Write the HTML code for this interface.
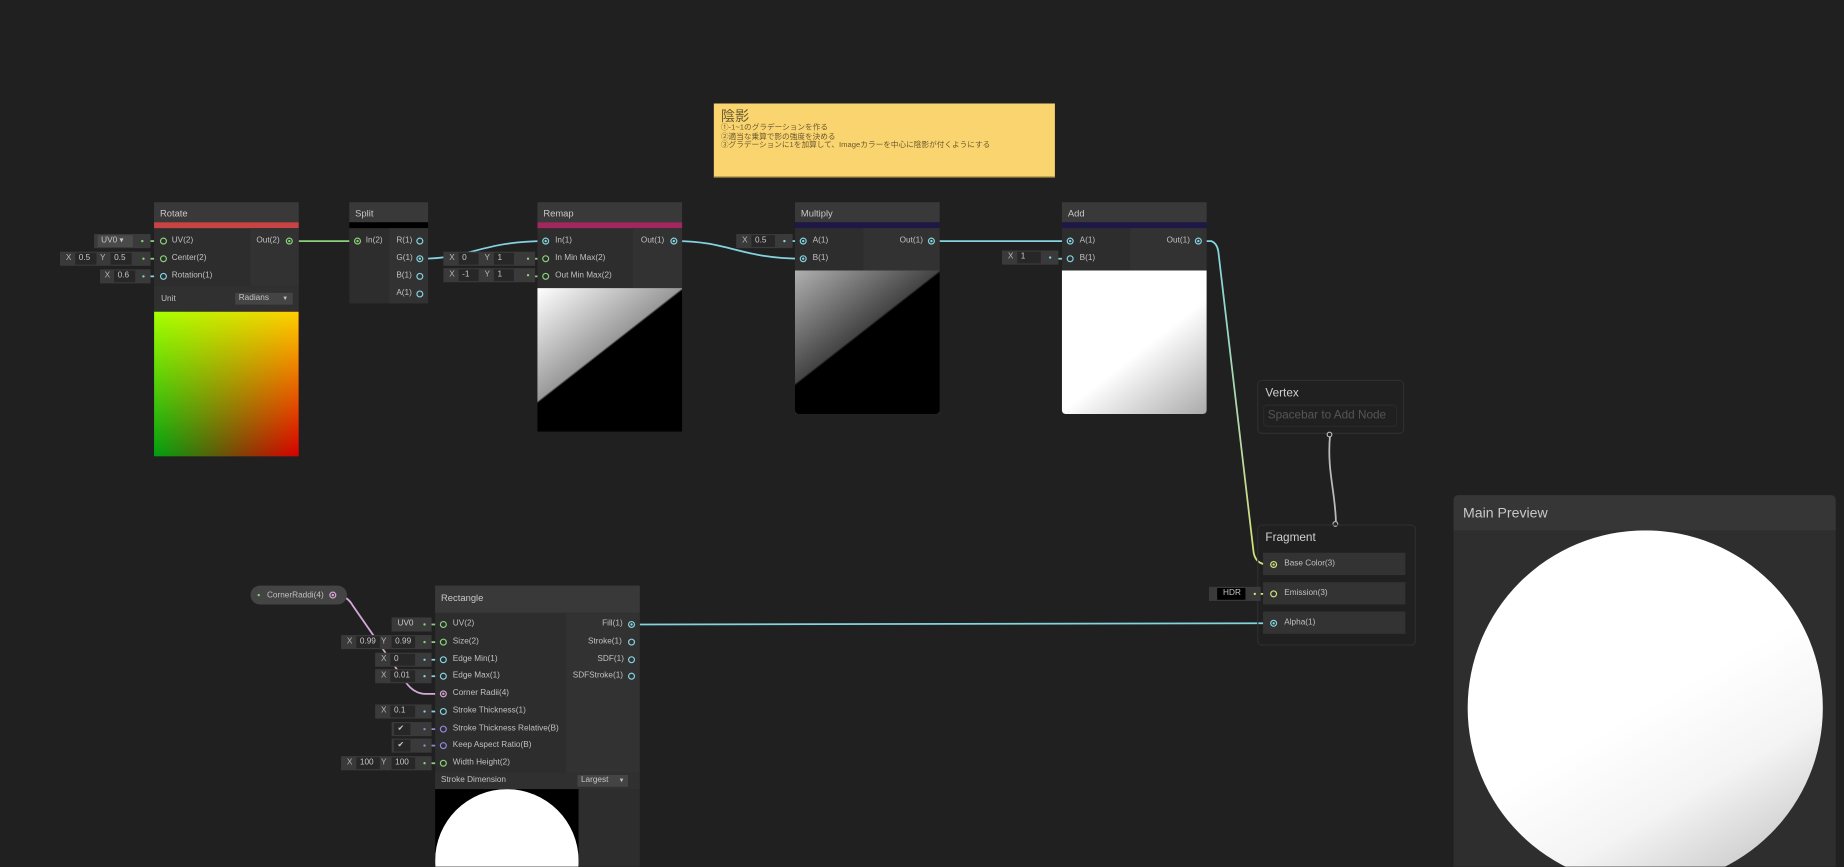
<!DOCTYPE html>
<html><head><meta charset="utf-8"><style>
html,body{margin:0;padding:0;background:#202020;overflow:hidden;width:1844px;height:867px}
#c{position:absolute;left:0;top:0;width:1568px;height:737px;overflow:hidden;transform:scale(1.17602);transform-origin:0 0;font-family:"Liberation Sans","Noto Sans CJK JP",sans-serif;color:#c4c4c4}
.a{position:absolute}
.h{position:absolute;background:#393939;font-size:8px;color:#c8c8c8;padding-left:5px;box-sizing:border-box}
.t{position:absolute;font-size:7px;line-height:8px;white-space:nowrap;color:#c0c0c0}
.p{position:absolute;width:4px;height:4px;border:1px solid;border-radius:50%;box-sizing:content-box}
.p.f::after{content:"";position:absolute;left:1px;top:1px;width:2px;height:2px;border-radius:50%;background:currentColor}
.fd{position:absolute;background:#3a3a3a;height:12px}
.ib{position:absolute;background:#272727;height:10px;top:1px;font-size:7px;line-height:10px;color:#c8c8c8;padding-left:3px;box-sizing:border-box}
.lb{position:absolute;top:2px;font-size:7px;line-height:8px;color:#b8b8b8}
.d{position:absolute;width:2px;height:2px;border-radius:50%;top:5px}
</style></head><body><div id="c">

<svg class="a" style="left:0;top:0" width="1568" height="737">
<defs><linearGradient id="gy" x1="0" y1="0" x2="0" y2="1"><stop offset="0" stop-color="#84d4e0"/><stop offset="1" stop-color="#d6e07a"/></linearGradient></defs>
<g fill="none" stroke-width="1.5">
<path d="M248 205 L304 205" stroke="#8ad27a"/>
<path d="M359 220 C400 220 410 205 464 205" stroke="#84d4e0"/>
<path d="M575 205 C620 205 630 220 683 220" stroke="#84d4e0"/>
<path d="M794 205 L910 205" stroke="#84d4e0"/>
<path d="M1021 205 L1030 205 Q1035 207 1036 214 L1066 470 Q1068 480 1078 480 L1083 480" stroke="url(#gy)"/>
<path d="M1131 370 C1128 400 1136 420 1136 446" stroke="#bbbbbb"/>
<path d="M539 531 L1083 530" stroke="#84d4e0"/>
<path d="M285 506 Q295 506 300 515 L345 580 Q352 590 362 590 L377 590" stroke="#d8a8d8"/>
<path d="M125 205 L137 205" stroke="#8ad27a"/><path d="M125 220 L137 220" stroke="#8ad27a"/><path d="M125 235 L137 235" stroke="#84d4e0"/>
<path d="M452 220 L463 220" stroke="#8ad27a"/><path d="M452 235 L463 235" stroke="#8ad27a"/>
<path d="M671 205 L682 205" stroke="#84d4e0"/><path d="M897 220 L909 220" stroke="#84d4e0"/>
<path d="M1070 505 L1083 505" stroke="#d6e07a"/>
<path d="M364 531 L376 531" stroke="#8ad27a"/><path d="M364 546 L376 546" stroke="#8ad27a"/>
<path d="M364 561 L376 561" stroke="#84d4e0"/><path d="M364 575 L376 575" stroke="#84d4e0"/>
<path d="M364 605 L376 605" stroke="#84d4e0"/><path d="M364 620 L376 620" stroke="#9088e0"/>
<path d="M364 634 L376 634" stroke="#9088e0"/><path d="M364 649 L376 649" stroke="#8ad27a"/>
</g></svg>

<div class="a" style="left:607px;top:88px;width:290px;height:62px;background:#f9d46f;border-bottom:1px solid #a08840">
<div class="a" style="left:6px;top:2px;font-size:12px;color:#6a5a30">陰影</div>
<div class="a" style="left:6px;top:17px;font-size:6.5px;line-height:7.5px;color:#6a5a30;white-space:nowrap">①-1~1のグラデーションを作る<br>②適当な乗算で影の強度を決める<br>③グラデーションに1を加算して、Imageカラーを中心に陰影が付くようにする</div>
</div>

<div class="a" style="left:131px;top:172px;width:123px;height:216px;background:#2d2d2d"></div>
<div class="h" style="left:131px;top:172px;width:123px;height:17px;line-height:20px">Rotate</div>
<div class="a" style="left:131px;top:189px;width:123px;height:5px;background:#c84444"></div>
<div class="a" style="left:213px;top:194px;width:41px;height:49px;background:#323232"></div>
<div class="a" style="left:131px;top:243px;width:123px;height:22px;background:#303030"></div>
<div class="p" style="left:136px;top:202px;color:#8ad27a"></div><div class="t" style="left:146px;top:201px">UV(2)</div>
<div class="p" style="left:136px;top:217px;color:#8ad27a"></div><div class="t" style="left:146px;top:216px">Center(2)</div>
<div class="p" style="left:136px;top:232px;color:#84d4e0"></div><div class="t" style="left:146px;top:231px">Rotation(1)</div>
<div class="t" style="left:218px;top:201px">Out(2)</div><div class="p f" style="left:243px;top:202px;color:#8ad27a"></div>
<div class="t" style="left:137px;top:251px">Unit</div>
<div class="a" style="left:200px;top:249px;width:49px;height:10px;background:#444;font-size:7px;line-height:10px;padding-left:3px;box-sizing:border-box">Radians <span style="position:absolute;right:4px;font-size:5px">▼</span></div>
<div class="a" style="left:131px;top:265px;width:123px;height:123px;background:linear-gradient(to right,#00a010,#d80000)"></div>
<div class="a" style="left:131px;top:265px;width:123px;height:123px;background:linear-gradient(to right,#a8ff00,#ffd000);-webkit-mask-image:linear-gradient(to bottom,#000,transparent)"></div>
<div class="fd" style="left:80px;top:199px;width:48px"><div class="ib" style="left:3px;width:30px;background:#4a4a4a">UV0 ▾</div><div class="d" style="left:40px;background:#8ad27a"></div></div>
<div class="fd" style="left:51px;top:214px;width:77px"><div class="lb" style="left:5px">X</div><div class="ib" style="left:13px;width:18px">0.5</div><div class="lb" style="left:34px">Y</div><div class="ib" style="left:43px;width:18px">0.5</div><div class="d" style="left:70px;background:#8ad27a"></div></div>
<div class="fd" style="left:85px;top:229px;width:43px"><div class="lb" style="left:4px">X</div><div class="ib" style="left:12px;width:18px">0.6</div><div class="d" style="left:36px;background:#84d4e0"></div></div>

<div class="a" style="left:297px;top:172px;width:67px;height:86px;background:#2d2d2d"></div>
<div class="h" style="left:297px;top:172px;width:67px;height:17px;line-height:20px">Split</div>
<div class="a" style="left:297px;top:189px;width:67px;height:5px;background:#000"></div>
<div class="a" style="left:331px;top:194px;width:33px;height:64px;background:#323232"></div>
<div class="p f" style="left:301px;top:202px;color:#8ad27a"></div><div class="t" style="left:311px;top:201px">In(2)</div>
<div class="t" style="left:337px;top:201px">R(1)</div><div class="p" style="left:354px;top:202px;color:#84d4e0"></div>
<div class="t" style="left:337px;top:216px">G(1)</div><div class="p f" style="left:354px;top:217px;color:#84d4e0"></div>
<div class="t" style="left:337px;top:231px">B(1)</div><div class="p" style="left:354px;top:232px;color:#84d4e0"></div>
<div class="t" style="left:337px;top:246px">A(1)</div><div class="p" style="left:354px;top:247px;color:#84d4e0"></div>

<div class="a" style="left:457px;top:172px;width:123px;height:195px;background:#2d2d2d"></div>
<div class="h" style="left:457px;top:172px;width:123px;height:17px;line-height:20px">Remap</div>
<div class="a" style="left:457px;top:189px;width:123px;height:5px;background:#a0285e"></div>
<div class="a" style="left:538px;top:194px;width:42px;height:51px;background:#323232"></div>
<div class="p f" style="left:461px;top:202px;color:#84d4e0"></div><div class="t" style="left:472px;top:201px">In(1)</div>
<div class="p" style="left:461px;top:217px;color:#8ad27a"></div><div class="t" style="left:472px;top:216px">In Min Max(2)</div>
<div class="p" style="left:461px;top:232px;color:#8ad27a"></div><div class="t" style="left:472px;top:231px">Out Min Max(2)</div>
<div class="t" style="left:545px;top:201px">Out(1)</div><div class="p f" style="left:570px;top:202px;color:#84d4e0"></div>
<div class="a" style="left:457px;top:245px;width:123px;height:122px;background:linear-gradient(142deg,#fff 0%,#999 44%,#000 45%,#000 100%)"></div>
<div class="fd" style="left:377px;top:214px;width:78px"><div class="lb" style="left:5px">X</div><div class="ib" style="left:13px;width:17px">0</div><div class="lb" style="left:35px">Y</div><div class="ib" style="left:43px;width:17px">1</div><div class="d" style="left:71px;background:#8ad27a"></div></div>
<div class="fd" style="left:377px;top:228px;width:78px"><div class="lb" style="left:5px">X</div><div class="ib" style="left:13px;width:17px">-1</div><div class="lb" style="left:35px">Y</div><div class="ib" style="left:43px;width:17px">1</div><div class="d" style="left:71px;background:#8ad27a"></div></div>

<div class="a" style="left:676px;top:172px;width:123px;height:180px;background:#2d2d2d"></div>
<div class="h" style="left:676px;top:172px;width:123px;height:17px;line-height:20px">Multiply</div>
<div class="a" style="left:676px;top:189px;width:123px;height:5px;background:#1e1846"></div>
<div class="a" style="left:734px;top:194px;width:65px;height:36px;background:#323232"></div>
<div class="p f" style="left:680px;top:202px;color:#84d4e0"></div><div class="t" style="left:691px;top:201px">A(1)</div>
<div class="p f" style="left:680px;top:217px;color:#84d4e0"></div><div class="t" style="left:691px;top:216px">B(1)</div>
<div class="t" style="left:765px;top:201px">Out(1)</div><div class="p f" style="left:789px;top:202px;color:#84d4e0"></div>
<div class="a" style="left:676px;top:230px;width:123px;height:122px;background:linear-gradient(142deg,#b0b0b0 0%,#444 44%,#000 45%,#000 100%);border-radius:0 0 3px 3px"></div>
<div class="fd" style="left:626px;top:199px;width:48px"><div class="lb" style="left:5px">X</div><div class="ib" style="left:13px;width:20px">0.5</div><div class="d" style="left:40px;background:#84d4e0"></div></div>

<div class="a" style="left:903px;top:172px;width:123px;height:180px;background:#2d2d2d"></div>
<div class="h" style="left:903px;top:172px;width:123px;height:17px;line-height:20px">Add</div>
<div class="a" style="left:903px;top:189px;width:123px;height:5px;background:#1e1846"></div>
<div class="a" style="left:961px;top:194px;width:65px;height:36px;background:#323232"></div>
<div class="p f" style="left:907px;top:202px;color:#84d4e0"></div><div class="t" style="left:918px;top:201px">A(1)</div>
<div class="p" style="left:907px;top:217px;color:#84d4e0"></div><div class="t" style="left:918px;top:216px">B(1)</div>
<div class="t" style="left:992px;top:201px">Out(1)</div><div class="p f" style="left:1016px;top:202px;color:#84d4e0"></div>
<div class="a" style="left:903px;top:230px;width:123px;height:122px;background:linear-gradient(142deg,#fff 0%,#fff 55%,#aaa 100%);border-radius:0 0 3px 3px"></div>
<div class="fd" style="left:852px;top:213px;width:48px"><div class="lb" style="left:5px">X</div><div class="ib" style="left:13px;width:20px">1</div><div class="d" style="left:40px;background:#84d4e0"></div></div>

<div class="a" style="left:1069px;top:323px;width:125px;height:46px;border:1px solid #2e2e2e;border-radius:4px;box-sizing:border-box;background:#202020"></div>
<div class="a" style="left:1076px;top:329px;font-size:10px;color:#d0d0d0">Vertex</div>
<div class="a" style="left:1074px;top:344px;width:114px;height:19px;border:1px solid #2a2a2a;border-radius:3px;box-sizing:border-box;font-size:10px;line-height:17px;color:#555;padding-left:3px;white-space:nowrap">Spacebar to Add Node</div>
<div class="p" style="left:1128px;top:367px;width:3px;height:3px;color:#bbb;background:#202020"></div>
<div class="p" style="left:1133px;top:443px;width:3px;height:3px;color:#bbb;background:#202020"></div>

<div class="a" style="left:1069px;top:446px;width:135px;height:103px;border:1px solid #2e2e2e;border-radius:4px;box-sizing:border-box"></div>
<div class="a" style="left:1076px;top:452px;font-size:10px;color:#d0d0d0">Fragment</div>
<div class="a" style="left:1074px;top:470px;width:121px;height:19px;background:#333"></div>
<div class="a" style="left:1074px;top:495px;width:121px;height:19px;background:#333"></div>
<div class="a" style="left:1074px;top:520px;width:121px;height:19px;background:#333"></div>
<div class="p f" style="left:1080px;top:477px;color:#d6e07a"></div><div class="t" style="left:1092px;top:476px">Base Color(3)</div>
<div class="p" style="left:1080px;top:502px;color:#d6e07a"></div><div class="t" style="left:1092px;top:501px">Emission(3)</div>
<div class="p f" style="left:1080px;top:527px;color:#84d4e0"></div><div class="t" style="left:1092px;top:526px">Alpha(1)</div>
<div class="fd" style="left:1028px;top:499px;width:44px"><div class="ib" style="left:7px;width:24px;background:#000;padding-left:5px">HDR</div><div class="d" style="left:38px;background:#d6e07a"></div></div>

<div class="a" style="left:1236px;top:421px;width:325px;height:316px;background:#2e2e2e;border-radius:4px 4px 0 0;overflow:hidden">
<div class="a" style="left:12px;top:30px;width:302px;height:302px;border-radius:50%;background:linear-gradient(150deg,#fff 0%,#fff 50%,#f4f4f4 70%,#b8b8b8 100%)"></div>
<div class="a" style="left:0;top:0;width:325px;height:30px;background:#363636;font-size:12px;line-height:31px;padding-left:8px;box-sizing:border-box;color:#c8c8c8">Main Preview</div>
</div>

<div class="a" style="left:213px;top:498px;width:82px;height:16px;background:#444;border-radius:8px"></div>
<div class="d" style="left:219px;top:505px;background:#8ad27a"></div>
<div class="t" style="left:227px;top:503px">CornerRaddi(4)</div>
<div class="p f" style="left:280px;top:503px;color:#d8a8d8"></div>

<div class="a" style="left:370px;top:498px;width:174px;height:239px;background:#2d2d2d"></div>
<div class="h" style="left:370px;top:498px;width:174px;height:23px;line-height:22px">Rectangle</div>
<div class="a" style="left:481px;top:521px;width:63px;height:136px;background:#323232"></div>
<div class="a" style="left:370px;top:657px;width:174px;height:14px;background:#303030"></div>
<div class="p" style="left:374px;top:528px;color:#8ad27a"></div><div class="t" style="left:385px;top:527px">UV(2)</div>
<div class="p" style="left:374px;top:543px;color:#8ad27a"></div><div class="t" style="left:385px;top:542px">Size(2)</div>
<div class="p" style="left:374px;top:558px;color:#84d4e0"></div><div class="t" style="left:385px;top:557px">Edge Min(1)</div>
<div class="p" style="left:374px;top:572px;color:#84d4e0"></div><div class="t" style="left:385px;top:571px">Edge Max(1)</div>
<div class="p f" style="left:374px;top:587px;color:#d8a8d8"></div><div class="t" style="left:385px;top:586px">Corner Radii(4)</div>
<div class="p" style="left:374px;top:602px;color:#84d4e0"></div><div class="t" style="left:385px;top:601px">Stroke Thickness(1)</div>
<div class="p" style="left:374px;top:617px;color:#9088e0"></div><div class="t" style="left:385px;top:616px">Stroke Thickness Relative(B)</div>
<div class="p" style="left:374px;top:631px;color:#9088e0"></div><div class="t" style="left:385px;top:630px">Keep Aspect Ratio(B)</div>
<div class="p" style="left:374px;top:646px;color:#8ad27a"></div><div class="t" style="left:385px;top:645px">Width Height(2)</div>
<div class="t" style="left:512px;top:527px">Fill(1)</div><div class="p f" style="left:534px;top:528px;color:#84d4e0"></div>
<div class="t" style="left:500px;top:542px">Stroke(1)</div><div class="p" style="left:534px;top:543px;color:#84d4e0"></div>
<div class="t" style="left:508px;top:557px">SDF(1)</div><div class="p" style="left:534px;top:558px;color:#84d4e0"></div>
<div class="t" style="left:487px;top:571px">SDFStroke(1)</div><div class="p" style="left:534px;top:572px;color:#84d4e0"></div>
<div class="t" style="left:375px;top:660px">Stroke Dimension</div>
<div class="a" style="left:491px;top:659px;width:43px;height:10px;background:#444;font-size:7px;line-height:10px;padding-left:3px;box-sizing:border-box">Largest<span style="position:absolute;right:3px;font-size:5px">▼</span></div>
<div class="a" style="left:370px;top:671px;width:122px;height:66px;background:#000;overflow:hidden"><div class="a" style="left:0;top:0;width:122px;height:122px;border-radius:50%;background:#fff"></div></div>
<div class="fd" style="left:333px;top:525px;width:34px"><div class="ib" style="left:2px;width:20px;background:#3a3a3a">UV0</div><div class="d" style="left:27px;background:#8ad27a"></div></div>
<div class="fd" style="left:290px;top:540px;width:77px"><div class="lb" style="left:5px">X</div><div class="ib" style="left:13px;width:20px">0.99</div><div class="lb" style="left:34px">Y</div><div class="ib" style="left:43px;width:20px">0.99</div><div class="d" style="left:70px;background:#8ad27a"></div></div>
<div class="fd" style="left:319px;top:555px;width:48px"><div class="lb" style="left:5px">X</div><div class="ib" style="left:13px;width:21px">0</div><div class="d" style="left:41px;background:#84d4e0"></div></div>
<div class="fd" style="left:319px;top:569px;width:48px"><div class="lb" style="left:5px">X</div><div class="ib" style="left:13px;width:21px">0.01</div><div class="d" style="left:41px;background:#84d4e0"></div></div>
<div class="fd" style="left:319px;top:599px;width:48px"><div class="lb" style="left:5px">X</div><div class="ib" style="left:13px;width:21px">0.1</div><div class="d" style="left:41px;background:#84d4e0"></div></div>
<div class="fd" style="left:333px;top:614px;width:34px"><div class="ib" style="left:2px;width:14px;padding-left:3px">✔</div><div class="d" style="left:27px;background:#9088e0"></div></div>
<div class="fd" style="left:333px;top:628px;width:34px"><div class="ib" style="left:2px;width:14px;padding-left:3px">✔</div><div class="d" style="left:27px;background:#9088e0"></div></div>
<div class="fd" style="left:290px;top:643px;width:77px"><div class="lb" style="left:5px">X</div><div class="ib" style="left:13px;width:20px">100</div><div class="lb" style="left:34px">Y</div><div class="ib" style="left:43px;width:20px">100</div><div class="d" style="left:70px;background:#8ad27a"></div></div>

</div></body></html>
